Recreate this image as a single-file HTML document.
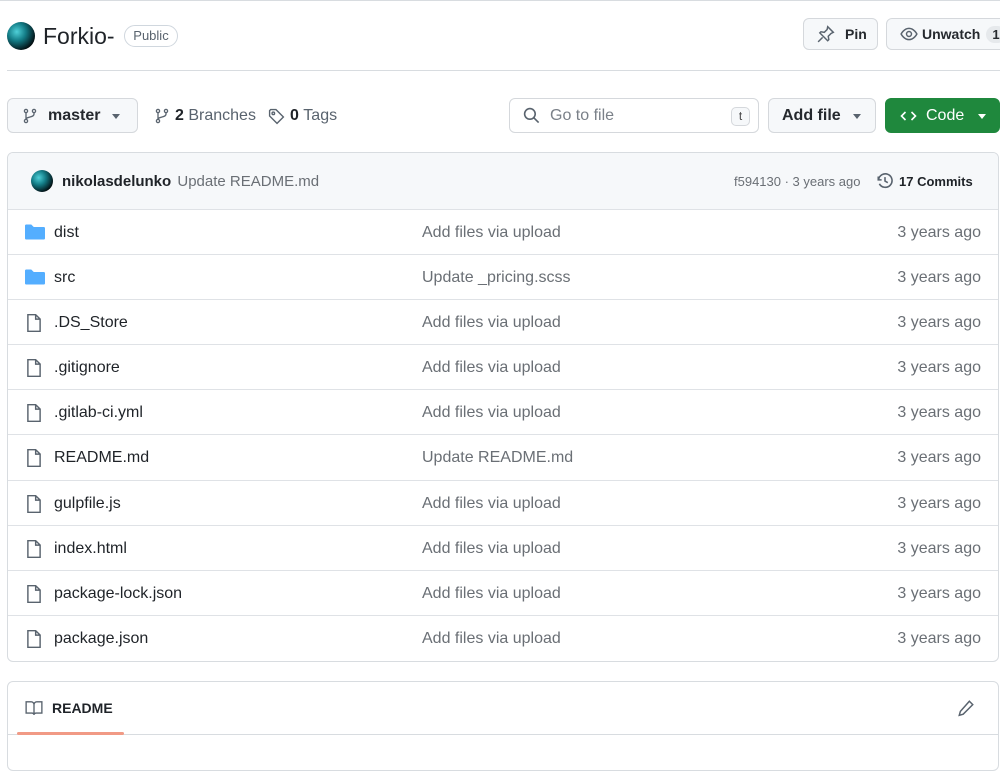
<!DOCTYPE html>
<html><head><meta charset="utf-8"><style>
*{box-sizing:border-box;margin:0;padding:0}
body{width:1000px;height:750px;overflow:hidden;background:#fff;font-family:"Liberation Sans",sans-serif;color:#1f2328;position:relative}
.abs{position:absolute}
.btn{position:absolute;border:1px solid #d5d8dc;border-radius:6px;background:#f6f8fa;display:flex;align-items:center;font-size:15px;font-weight:bold;color:#25292e}
.car{position:absolute;top:15px;width:0;height:0;border-left:4px solid transparent;border-right:4px solid transparent;border-top:5px solid #59636e}
.av{border-radius:50%;background:radial-gradient(circle at 35% 35%,#4fd0d8 0,#137c86 35%,#062a30 65%,#000 80%)}
.row{position:absolute;left:8px;width:990px;height:45px;border-top:1px solid #dfe2e6;font-size:16px;color:#1f2328}
.row .n{position:absolute;left:46px;top:14px}
.row .m{position:absolute;left:414px;top:14px;color:#6a6f75}
.row .d{position:absolute;right:17px;top:14px;color:#6a6f75}
.row svg{position:absolute;left:17px;top:13px}
</style></head><body>
<div class="abs" style="left:0;top:0;width:1000px;height:1px;background:#d8dce0"></div>
<div class="abs av" style="left:7px;top:22px;width:28px;height:28px"></div>
<div class="abs" style="left:43px;top:23px;font-size:23px;color:#1f2328">Forkio-</div>
<div class="abs" style="left:124px;top:25px;width:54px;height:22px;border:1px solid #d0d7de;border-radius:11px;font-size:13px;color:#59636e;text-align:center;line-height:20px">Public</div>
<div class="btn" style="left:803px;top:18px;width:75px;height:32px;padding-left:13px"><svg width="18" height="18" viewBox="0 0 16 16" fill="none" stroke="#59636e" stroke-width="1.3"><path d="M9.5 1.5l5 5-2 1-2.5 2.5.5 3-1 1-7-7 1-1 3 .5L9 4 9.5 1.5zM5 11l-4 4"/></svg><span style="margin-left:10px;font-size:14px">Pin</span></div>
<div class="btn" style="left:886px;top:18px;width:130px;height:32px;padding-left:13px"><svg width="18" height="18" viewBox="0 0 16 16" fill="none" stroke="#59636e" stroke-width="1.3"><path d="M1 8s2.5-5 7-5 7 5 7 5-2.5 5-7 5-7-5-7-5z"/><circle cx="8" cy="8" r="2.2"/></svg><span style="margin-left:4px;font-size:14px">Unwatch</span><span style="margin-left:6px;background:#e6e9ec;border-radius:10px;padding:1px 6px;font-size:13px">1</span></div>
<div class="abs" style="left:7px;top:70px;width:993px;height:1px;background:#d8dce0"></div>

<div class="btn" style="left:7px;top:98px;width:131px;height:35px;padding-left:14px"><svg width="16" height="16" viewBox="0 0 16 16" fill="none" stroke="#59636e" stroke-width="1.3"><circle cx="4" cy="3" r="1.6"/><circle cx="4" cy="13" r="1.6"/><circle cx="12" cy="3" r="1.6"/><path d="M4 4.6v6.8M12 4.6v1.4c0 2-2 2.5-4 3S4 10 4 11.4"/></svg><span style="margin-left:10px;font-size:16px">master</span><span class="car" style="left:104px"></span></div>
<div class="abs" style="left:154px;top:107px;font-size:16px;color:#59636e;display:flex;align-items:center"><svg width="16" height="16" viewBox="0 0 16 16" fill="none" stroke="#59636e" stroke-width="1.3"><circle cx="4" cy="3" r="1.6"/><circle cx="4" cy="13" r="1.6"/><circle cx="12" cy="3" r="1.6"/><path d="M4 4.6v6.8M12 4.6v1.4c0 2-2 2.5-4 3S4 10 4 11.4"/></svg><b style="color:#1f2328;margin-left:5px">2</b>&nbsp;Branches
<svg style="margin-left:12px" width="17" height="17" viewBox="0 0 16 16" fill="none" stroke="#59636e" stroke-width="1.3"><path d="M1.5 2.5v5l7 7 6-6-7-7h-5z"/><circle cx="5" cy="5" r="1.2"/></svg><b style="color:#1f2328;margin-left:5px">0</b>&nbsp;Tags</div>

<div class="abs" style="left:509px;top:98px;width:250px;height:35px;border:1px solid #d5d8dc;border-radius:6px;display:flex;align-items:center;padding-left:13px;font-size:16px;color:#7a8088"><svg width="17" height="17" viewBox="0 0 16 16" fill="none" stroke="#59636e" stroke-width="1.5"><circle cx="6.5" cy="6.5" r="5"/><path d="M10.2 10.2l4.5 4.5"/></svg><span style="margin-left:10px">Go to file</span><span style="position:absolute;right:8px;top:8px;width:19px;height:19px;border:1px solid #d5d8dc;border-radius:5px;background:#f6f8fa;font-size:12px;text-align:center;line-height:17px;color:#444">t</span></div>
<div class="btn" style="left:768px;top:98px;width:108px;height:35px;padding-left:13px;font-size:16px">Add file<span class="car" style="left:84px"></span></div>
<div class="btn" style="left:885px;top:98px;width:115px;height:35px;padding-left:14px;background:#1f883d;border-color:#1f883d;color:#fff;font-size:16px"><svg width="17" height="16" viewBox="0 0 16 16" fill="none" stroke="#fff" stroke-width="1.6"><path d="M5 4L1 8l4 4M11 4l4 4-4 4"/></svg><span style="margin-left:9px;font-weight:normal">Code</span><span class="car" style="left:92px;border-top-color:#fff"></span></div>

<div class="abs" style="left:7px;top:152px;width:992px;height:510px;border:1px solid #d8dce0;border-radius:6px;overflow:hidden">
<div style="height:57px;background:#f6f8fa;position:relative">
<div class="abs av" style="left:23px;top:17px;width:22px;height:22px"></div>
<div class="abs" style="left:54px;top:20px;font-size:15px;font-weight:bold">nikolasdelunko <span style="font-weight:normal;color:#6a6f75;margin-left:2px">Update README.md</span></div>
<div class="abs" style="left:726px;top:21px;font-size:13px;color:#6a6f75">f594130 · 3 years ago</div>
<div class="abs" style="left:868px;top:19px;font-size:13px;font-weight:bold;display:flex;align-items:center"><svg width="18" height="18" viewBox="0 0 16 16" fill="none" stroke="#59636e" stroke-width="1.4"><path d="M2 4v3h3"/><path d="M2.3 7A6 6 0 1 1 3 10.5"/><path d="M8 4.5V8l2.5 1.5"/></svg><span style="margin-left:5px">17 Commits</span></div>
</div>
</div>
<div class="row" style="top:209px"><svg width="20" height="18" viewBox="0 0 16 14"><path d="M0 2a1 1 0 0 1 1-1h4l2 2h8a1 1 0 0 1 1 1v8a1 1 0 0 1-1 1H1a1 1 0 0 1-1-1z" fill="#54aeff"/></svg><span class="n">dist</span><span class="m">Add files via upload</span><span class="d">3 years ago</span></div>
<div class="row" style="top:254px"><svg width="20" height="18" viewBox="0 0 16 14"><path d="M0 2a1 1 0 0 1 1-1h4l2 2h8a1 1 0 0 1 1 1v8a1 1 0 0 1-1 1H1a1 1 0 0 1-1-1z" fill="#54aeff"/></svg><span class="n">src</span><span class="m">Update _pricing.scss</span><span class="d">3 years ago</span></div>
<div class="row" style="top:299px"><svg width="18" height="20" viewBox="0 0 16 18" fill="none" stroke="#59636e" stroke-width="1.3"><path d="M2.5 1.5h7l4 4v11h-11z M9.5 1.5v4h4"/></svg><span class="n">.DS_Store</span><span class="m">Add files via upload</span><span class="d">3 years ago</span></div>
<div class="row" style="top:344px"><svg width="18" height="20" viewBox="0 0 16 18" fill="none" stroke="#59636e" stroke-width="1.3"><path d="M2.5 1.5h7l4 4v11h-11z M9.5 1.5v4h4"/></svg><span class="n">.gitignore</span><span class="m">Add files via upload</span><span class="d">3 years ago</span></div>
<div class="row" style="top:389px"><svg width="18" height="20" viewBox="0 0 16 18" fill="none" stroke="#59636e" stroke-width="1.3"><path d="M2.5 1.5h7l4 4v11h-11z M9.5 1.5v4h4"/></svg><span class="n">.gitlab-ci.yml</span><span class="m">Add files via upload</span><span class="d">3 years ago</span></div>
<div class="row" style="top:434px"><svg width="18" height="20" viewBox="0 0 16 18" fill="none" stroke="#59636e" stroke-width="1.3"><path d="M2.5 1.5h7l4 4v11h-11z M9.5 1.5v4h4"/></svg><span class="n">README.md</span><span class="m">Update README.md</span><span class="d">3 years ago</span></div>
<div class="row" style="top:480px"><svg width="18" height="20" viewBox="0 0 16 18" fill="none" stroke="#59636e" stroke-width="1.3"><path d="M2.5 1.5h7l4 4v11h-11z M9.5 1.5v4h4"/></svg><span class="n">gulpfile.js</span><span class="m">Add files via upload</span><span class="d">3 years ago</span></div>
<div class="row" style="top:525px"><svg width="18" height="20" viewBox="0 0 16 18" fill="none" stroke="#59636e" stroke-width="1.3"><path d="M2.5 1.5h7l4 4v11h-11z M9.5 1.5v4h4"/></svg><span class="n">index.html</span><span class="m">Add files via upload</span><span class="d">3 years ago</span></div>
<div class="row" style="top:570px"><svg width="18" height="20" viewBox="0 0 16 18" fill="none" stroke="#59636e" stroke-width="1.3"><path d="M2.5 1.5h7l4 4v11h-11z M9.5 1.5v4h4"/></svg><span class="n">package-lock.json</span><span class="m">Add files via upload</span><span class="d">3 years ago</span></div>
<div class="row" style="top:615px"><svg width="18" height="20" viewBox="0 0 16 18" fill="none" stroke="#59636e" stroke-width="1.3"><path d="M2.5 1.5h7l4 4v11h-11z M9.5 1.5v4h4"/></svg><span class="n">package.json</span><span class="m">Add files via upload</span><span class="d">3 years ago</span></div>

<div class="abs" style="left:7px;top:681px;width:992px;height:90px;border:1px solid #d8dce0;border-radius:6px">
<div class="abs" style="left:0;top:52px;width:990px;height:1px;background:#d8dce0"></div>
<div class="abs" style="left:9px;top:50px;width:107px;height:3px;background:#f19a85;border-radius:2px"></div>
<div class="abs" style="left:17px;top:18px;display:flex;align-items:center;font-size:14px;font-weight:bold"><svg width="18" height="16" viewBox="0 0 16 14" fill="none" stroke="#59636e" stroke-width="1.2"><path d="M1 1.5h4.5A2.5 2.5 0 0 1 8 4v9a2 2 0 0 0-2-1.5H1zM15 1.5h-4.5A2.5 2.5 0 0 0 8 4v9a2 2 0 0 1 2-1.5h5z"/></svg><span style="margin-left:9px">README</span></div>
<svg class="abs" style="left:949px;top:17px" width="18" height="18" viewBox="0 0 16 16" fill="none" stroke="#59636e" stroke-width="1.3"><path d="M11 2l3 3-8.5 8.5L2 14.5l1-3.5z"/></svg>
</div>
</body></html>
